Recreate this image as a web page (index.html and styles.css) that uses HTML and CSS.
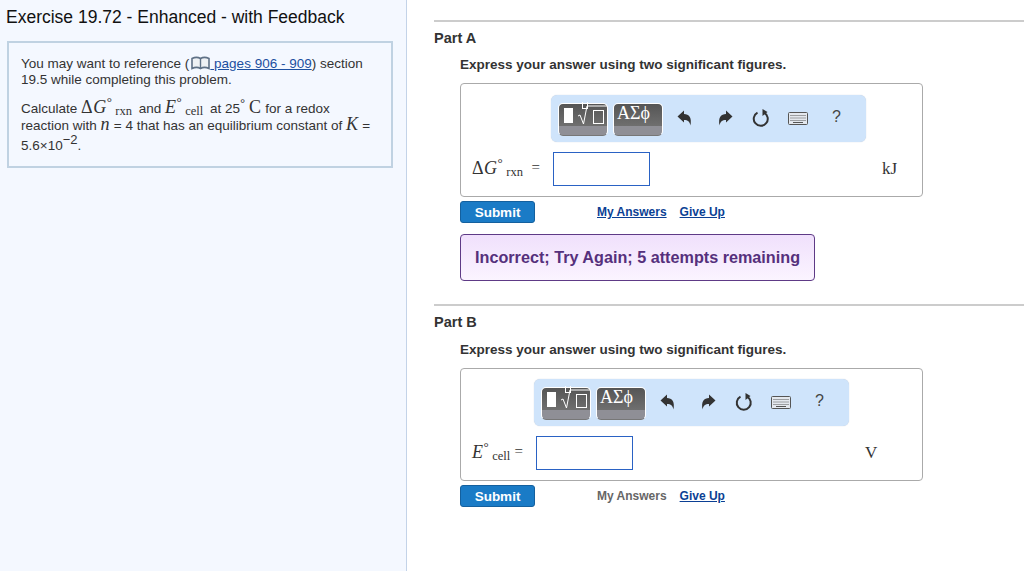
FILE: index.html
```html
<!DOCTYPE html>
<html lang="en">
<head>
    <meta charset="UTF-8">
    <meta name="viewport" content="width=device-width, initial-scale=1.0">
    <title>Exercise 19.72 - Enhanced - with Feedback</title>
    <link rel="stylesheet" href="styles.css">
</head>
<body>
    <svg class="icon-defs" aria-hidden="true">
        <symbol id="i-templates" viewBox="0 0 46 32">
            <rect x="2" y="6" width="9" height="15" fill="#fff"/>
            <rect x="20.500" y="-0.500" width="5" height="7" fill="none" stroke="#fff"/>
            <path d="M16 14l2-1 3.500 9 3.500-18H45" fill="none" stroke="#fff" stroke-width="1"/>
            <rect x="31.500" y="8.500" width="10" height="13" fill="none" stroke="#fff"/>
        </symbol>
        <symbol id="i-undo" viewBox="0 0 16 16">
            <path d="M0.500 6.500L7 0.500v3.500c5 0 8 3.500 6.500 11.500-1-4-2.500-5.500-6.500-5.500V12.500z" fill="#333"/>
        </symbol>
        <symbol id="i-redo" viewBox="0 0 16 16">
            <path d="M15.500 6.500L9 0.500v3.500c-5 0-8 3.500-6.500 11.500 1-4 2.500-5.500 6.500-5.500V12.500z" fill="#333"/>
        </symbol>
        <symbol id="i-reset" viewBox="0 0 18 18">
            <path d="M5.500 3.600a7 7 0 1 0 6.500 0" fill="none" stroke="#333" stroke-width="2"/>
            <path d="M10.500 0v7l5-4z" fill="#333"/>
        </symbol>
        <symbol id="i-keys" viewBox="0 0 20 13">
            <rect x="0.500" y="0.500" width="19" height="12" rx="1" fill="#e4e8ee" stroke="#555"/>
            <path d="M2.500 3.500h15M2.500 6h15M2.500 8.500h15" stroke="#555" stroke-dasharray="1 1"/>
            <path d="M5 10.500h10" stroke="#555"/>
        </symbol>
    </svg>

    <div class="page">
        <div class="sidebar">
            <h1>Exercise 19.72 - Enhanced - with Feedback</h1>
            <div class="problem">
                <p>You may want to reference (<svg class="book" viewBox="0 0 19 15"><path d="M1 2.500c3-1.500 6-1.500 8.500 0 2.500-1.500 5.500-1.500 8.500 0v10c-3-1.500-6-1.500-8.500 0-2.500-1.500-5.500-1.500-8.500 0z" fill="#eef1f4" stroke="#5f7186" stroke-width="1.600"/><path d="M9.500 2.500v10" stroke="#5f7186" stroke-width="1.400"/></svg><a href="#" class="ref"> pages 906 - 909</a>) section 19.5 while completing this problem.</p>
                <p>Calculate <span class="math big">&Delta;<i>G</i><sup>&deg;</sup></span><span class="math sub">rxn</span> and <span class="math big"><i>E</i><sup>&deg;</sup></span><span class="math sub">cell</span> at 25<sup class="deg">&deg;</sup> <span class="math big">C</span> for a redox reaction with <span class="math big"><i>n</i></span> = 4 that has an equilibrium constant of <span class="math big"><i>K</i></span> = 5.6&times;10<sup class="exp">&minus;2</sup>.</p>
            </div>
        </div>

        <div class="content">
            <div class="part">
                <h2>Part A</h2>
                <p class="prompt">Express your answer using two significant figures.</p>
                <div class="answer">
                    <div class="toolbar">
                        <div class="tool-btn"><svg class="tpl"><use href="#i-templates"/></svg></div>
                        <div class="tool-btn symbols">&Alpha;&Sigma;&#981;</div>
                        <svg class="tool undo"><use href="#i-undo"/></svg>
                        <svg class="tool redo"><use href="#i-redo"/></svg>
                        <svg class="tool reset"><use href="#i-reset"/></svg>
                        <svg class="tool keys"><use href="#i-keys"/></svg>
                        <span class="help">?</span>
                    </div>
                    <div class="label label-g"><span><span class="math big">&Delta;<i>G</i><sup>&deg;</sup></span><span class="math sub">rxn</span></span><span class="eq">=</span></div>
                    <div class="field"></div>
                    <div class="unit">kJ</div>
                </div>
                <div class="actions">
                    <button class="submit">Submit</button>
                    <a href="#" class="link first">My Answers</a>
                    <a href="#" class="link">Give Up</a>
                </div>
                <div class="feedback">Incorrect; Try Again; 5 attempts remaining</div>
            </div>

            <div class="part">
                <h2>Part B</h2>
                <p class="prompt">Express your answer using two significant figures.</p>
                <div class="answer">
                    <div class="toolbar">
                        <div class="tool-btn"><svg class="tpl"><use href="#i-templates"/></svg></div>
                        <div class="tool-btn symbols">&Alpha;&Sigma;&#981;</div>
                        <svg class="tool undo"><use href="#i-undo"/></svg>
                        <svg class="tool redo"><use href="#i-redo"/></svg>
                        <svg class="tool reset"><use href="#i-reset"/></svg>
                        <svg class="tool keys"><use href="#i-keys"/></svg>
                        <span class="help">?</span>
                    </div>
                    <div class="label label-e"><span><span class="math big"><i>E</i><sup>&deg;</sup></span><span class="math sub">cell</span></span><span class="eq">=</span></div>
                    <div class="field"></div>
                    <div class="unit">V</div>
                </div>
                <div class="actions">
                    <button class="submit">Submit</button>
                    <span class="link first off">My Answers</span>
                    <a href="#" class="link">Give Up</a>
                </div>
            </div>
        </div>
    </div>
</body>
</html>
```

FILE: styles.css
```css
body {
    margin: 0;
    font-family: "Liberation Sans", Arial, sans-serif;
    color: #333;
    background: #fff;
}
.icon-defs {
    display: none;
}
.page {
    display: flex;
    height: 571px;
    overflow: hidden;
}
.sidebar {
    flex: none;
    width: 407px;
    box-sizing: border-box;
    background: #f4f8ff;
    border-right: 1px solid #c3d3e8;
    padding: 7px 0 0 7px;
}
h1 {
    margin: 0 0 14px -1px;
    font-size: 17.500px;
    line-height: 20px;
    font-weight: normal;
    color: #111;
}
.problem {
    width: 386px;
    height: 127px;
    box-sizing: border-box;
    border: 2px solid #c0d2e2;
    padding: 13px 12px 0 12px;
    font-size: 13.500px;
    line-height: 16px;
}
.problem p {
    margin: 0 0 12px 0;
}
.book {
    width: 19px;
    height: 15px;
    margin-left: 2px;
    vertical-align: -3px;
}
.ref {
    color: #1c4fa0;
    text-decoration: underline;
}
.math {
    font-family: "Liberation Serif", serif;
}
.math.big {
    font-size: 18px;
    line-height: 15px;
    letter-spacing: 0.500px;
}
.math.sub {
    font-size: 12.500px;
    line-height: 0;
    margin-left: 3px;
    margin-right: 3px;
    position: relative;
    top: 2px;
}
sup {
    font-size: 13px;
    line-height: 0;
}
.exp {
    font-size: 13px;
    line-height: 12px;
}

.content {
    flex: 1;
    padding: 20px 0 0 27px;
}
.part {
    border-top: 2px solid #ccc;
    height: 282px;
}
h2 {
    margin: 8px 0 0 0;
    font-size: 14.500px;
    line-height: 16px;
    color: #333;
}
.prompt {
    margin: 11px 0 10px 26px;
    font-size: 13.500px;
    line-height: 16px;
    font-weight: bold;
}
.part + .part .prompt {
    margin-top: 12px;
}
.answer {
    margin-left: 26px;
    width: 463px;
    height: 114px;
    box-sizing: border-box;
    border: 1px solid #aaa;
    border-radius: 4px;
    display: grid;
    grid-template-columns: auto 313px auto;
    grid-template-rows: 47px 34px;
    justify-content: start;
    row-gap: 10px;
    padding: 11px 0 0 11px;
}
.part + .part .answer {
    height: 113px;
    padding-top: 10px;
}
.toolbar {
    grid-column: 2 / 4;
    margin-left: -2px;
    width: 315px;
    box-sizing: border-box;
    background: #cfe4fb;
    border-radius: 6px;
    box-shadow: 0 0 1px #b8c4d0;
    display: flex;
    align-items: center;
    padding: 0 0 0 7px;
}
.tool-btn {
    width: 50px;
    height: 33px;
    box-sizing: border-box;
    margin-top: 1px;
    margin-right: 5px;
    border: 1px solid #fff;
    border-bottom: 1px solid #777;
    border-radius: 5px;
    background: linear-gradient(#555 0, #6f6f6f 22px, #8f8f96 22px, #8f8f96 100%);
    color: #fff;
}
.tpl {
    display: block;
    width: 46px;
    height: 32px;
    margin-left: 3px;
    margin-top: -2px;
    overflow: visible;
}
.symbols {
    font-family: "Liberation Serif", serif;
    font-size: 18px;
    line-height: 18px;
    padding-left: 3px;
}
.tool {
    display: block;
    flex: none;
    margin-top: -2px;
}
.undo, .redo {
    width: 16px;
    height: 16px;
}
.undo {
    margin-left: 9px;
}
.redo {
    margin-left: 24px;
}
.reset {
    width: 18px;
    height: 18px;
    margin-left: 19px;
}
.keys {
    width: 20px;
    height: 13px;
    margin-top: 0;
    margin-left: 18px;
}
.help {
    margin-left: 24px;
    margin-top: -3px;
    font-size: 16px;
    color: #444;
}
.label {
    align-self: center;
    display: flex;
    justify-content: space-between;
    align-items: center;
    font-family: "Liberation Serif", serif;
    font-size: 13px;
    margin-right: 13px;
    white-space: nowrap;
}
.label-g {
    width: 68px;
}
.label-e {
    width: 51px;
}
.eq {
    font-size: 15px;
    margin-bottom: 3px;
}
.field {
    width: 97px;
    height: 34px;
    box-sizing: border-box;
    background: #fff;
    border: 1px solid #2a62c4;
}
.unit {
    align-self: center;
    margin-left: 16px;
    font-family: "Liberation Serif", serif;
    font-size: 17px;
}
.actions {
    display: flex;
    align-items: center;
    margin: 4px 0 0 26px;
    height: 22px;
}
.submit {
    width: 75px;
    height: 22px;
    padding: 0;
    background: #1a7bc6;
    color: #fff;
    border: 1px solid #14609e;
    border-radius: 3px;
    font-family: "Liberation Sans", Arial, sans-serif;
    font-size: 13.500px;
    font-weight: bold;
}
.link {
    font-size: 12px;
    font-weight: bold;
    color: #0b3f94;
    text-decoration: underline;
    margin-left: 13px;
}
.link.first {
    margin-left: 62px;
}
.link.off {
    color: #666;
    text-decoration: none;
}
.feedback {
    margin: 11px 0 0 26px;
    width: 355px;
    height: 47px;
    box-sizing: border-box;
    border: 1px solid #5e3a86;
    border-radius: 4px;
    background: linear-gradient(#f0e0fc, #fbf4ff);
    color: #55307c;
    font-size: 16.200px;
    font-weight: bold;
    line-height: 45px;
    padding-left: 14px;
    white-space: nowrap;
}
```
